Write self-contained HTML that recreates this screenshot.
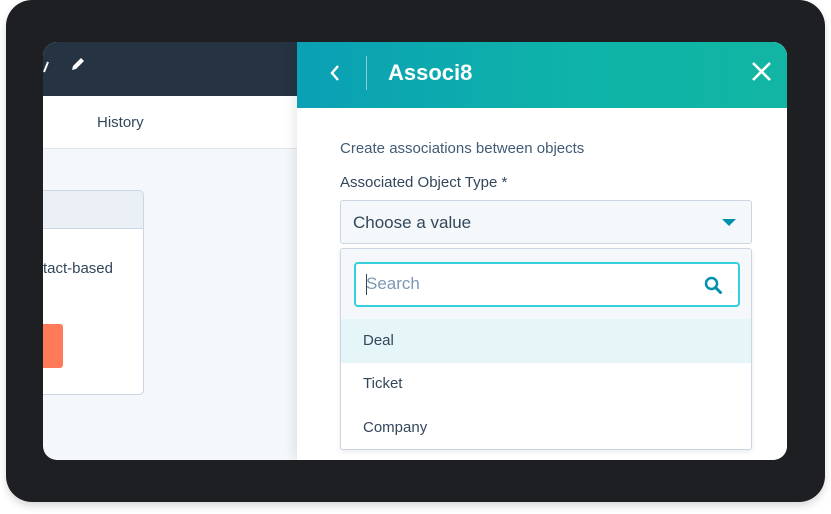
<!DOCTYPE html>
<html><head><style>
*{margin:0;padding:0;box-sizing:border-box}
body{width:831px;height:514px;background:#fff;font-family:"Liberation Sans",sans-serif;position:relative;overflow:hidden}
.frame{position:absolute;left:6px;top:0;width:819px;height:502px;background:#1e1f23;border-radius:26px;box-shadow:0 4px 8px rgba(0,0,0,.15)}
.screen{position:absolute;left:43px;top:42px;width:744px;height:418px;border-radius:14px;overflow:hidden;background:#f4f7fb}
.lh{position:absolute;left:0;top:0;width:254px;height:54px;background:#253342}
.tabs{position:absolute;left:0;top:54px;width:254px;height:53px;background:#fff;border-bottom:1px solid #dfe3eb}
.card{position:absolute;left:-10px;top:148px;width:111px;height:205px;background:#fff;border:1px solid #cbd6e2;border-radius:5px;overflow:hidden}
.panel{position:absolute;left:254px;top:0;width:490px;height:418px;background:#fff;box-shadow:-4px 0 10px rgba(0,0,0,.08)}
.ph{height:66px;background:linear-gradient(90deg,#0aa0b5,#0fb4a8 60%,#12b5a3);position:relative}
.t{position:absolute;color:#33475b}
</style></head><body>
<div class="frame"></div>
<div class="screen">
 <div class="lh">
  <svg style="position:absolute;left:0;top:19px" width="6" height="12" viewBox="0 0 6 12"><path d="M5 1L1 11" stroke="#fff" stroke-width="2"/></svg>
  <svg style="position:absolute;left:27px;top:14px" width="16" height="16" viewBox="0 0 16 16"><path d="M2 14l1-4 8-8 3 3-8 8z" fill="#fff"/></svg>
 </div>
 <div class="tabs"><div class="t" style="left:54px;top:18px;font-size:15px">History</div></div>
 <div class="card">
  <div style="height:38px;background:#eaf0f6;border-bottom:1px solid #cbd6e2"></div>
  <div class="t" style="right:30px;top:69px;font-size:15px;white-space:nowrap">ntact-based</div>
  <div style="position:absolute;left:0;top:133px;width:29px;height:44px;background:#ff7a59;border-radius:3px"></div>
 </div>
 <div class="panel">
  <div class="ph">
   <svg style="position:absolute;left:32px;top:22px" width="12" height="18" viewBox="0 0 12 18"><path d="M9 2L3 9l6 7" stroke="#fff" stroke-width="2.4" fill="none"/></svg>
   <div style="position:absolute;left:69px;top:14px;width:1px;height:34px;background:rgba(255,255,255,.5)"></div>
   <div style="position:absolute;left:91px;top:18px;color:#fff;font-size:22px;font-weight:bold">Associ8</div>
   <svg style="position:absolute;left:454px;top:19px" width="21" height="21" viewBox="0 0 21 21"><path d="M2 2l17 17M19 2L2 19" stroke="#fff" stroke-width="2.6"/></svg>
  </div>
  <div class="t" style="left:43px;top:98px;font-size:15px;color:#425b76">Create associations between objects</div>
  <div class="t" style="left:43px;top:132px;font-size:15px">Associated Object Type *</div>
  <div style="position:absolute;left:43px;top:158px;width:412px;height:44px;background:#f5f8fa;border:1px solid #cbd6e2;border-radius:3px">
   <div class="t" style="left:12px;top:12px;font-size:17px">Choose a value</div>
   <div style="position:absolute;left:381px;top:18px;border-left:7px solid transparent;border-right:7px solid transparent;border-top:7px solid #0091ae"></div>
  </div>
  <div style="position:absolute;left:43px;top:206px;width:412px;height:202px;background:#fff;border:1px solid #cbd6e2;border-radius:3px;box-shadow:0 2px 6px rgba(0,0,0,.08);overflow:hidden">
   <div style="height:70px;background:#f5f8fa"></div>
   <div style="position:absolute;left:13px;top:13px;width:386px;height:45px;background:#fff;border:2px solid #35d0dc;border-radius:4px">
    <div style="position:absolute;left:10px;top:10px;width:1px;height:21px;background:#33475b"></div>
    <div class="t" style="left:10px;top:10px;font-size:17px;color:#7c98b6">Search</div>
    <svg style="position:absolute;left:348px;top:12px" width="19" height="19" viewBox="0 0 19 19"><circle cx="7.5" cy="7.5" r="5.5" stroke="#0091ae" stroke-width="2.5" fill="none"/><path d="M11.5 11.5l5 5" stroke="#0091ae" stroke-width="3" stroke-linecap="round"/></svg>
   </div>
   <div style="position:absolute;left:0;top:70px;width:100%;height:44px;background:#e5f5f8"></div>
   <div class="t" style="left:22px;top:83px;font-size:15px">Deal</div>
   <div class="t" style="left:22px;top:126px;font-size:15px">Ticket</div>
   <div class="t" style="left:22px;top:170px;font-size:15px">Company</div>
  </div>
 </div>
</div>
</body></html>
